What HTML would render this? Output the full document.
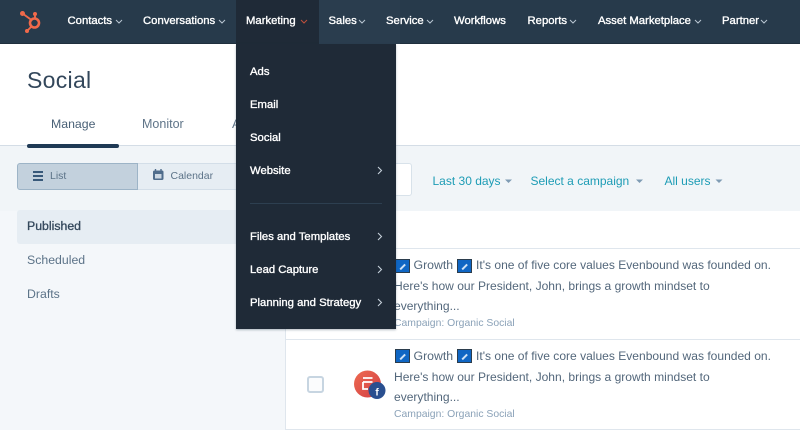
<!DOCTYPE html>
<html>
<head>
<meta charset="utf-8">
<style>
html,body{margin:0;padding:0;width:800px;height:430px;overflow:hidden;background:#fff;font-family:"Liberation Sans",sans-serif}
.a{position:absolute;white-space:nowrap}
#root{position:relative;width:800px;height:430px;overflow:hidden;filter:blur(.35px)}
.n{color:#fff;font-size:11.3px;-webkit-text-stroke:.35px #fff;top:14px;line-height:14px}
.m{color:#fff;font-size:11.3px;-webkit-text-stroke:.35px #fff;left:250px;line-height:14px}
.t{color:#53677b;font-size:12.05px;line-height:20px;left:394px}
.u{color:#1d9cb5;font-size:12px;top:173px;line-height:16px}
.s{color:#52687d;font-size:12.3px;left:27px;line-height:16px}
.e{position:absolute;width:15px;height:14px;background:#0f66c4;border:1px solid #2b3d4d;box-sizing:border-box}
.e:after{content:"";position:absolute;left:3px;top:5.5px;width:7px;height:1.5px;background:#cfe3f7;transform:rotate(-45deg)}
</style>
</head>
<body>
<div id="root">
<!-- nav -->
<div class="a" style="left:0;top:0;width:800px;height:43px;background:#273a4b;border-bottom:1px solid #1f2f3d"></div>
<div class="a" style="left:319px;top:0;width:81px;height:44px;background:#2a3d4e"></div>
<svg class="a" style="left:18px;top:9px" width="26" height="26" viewBox="0 0 26 26" fill="none" stroke="#f0694a">
<circle cx="16.500" cy="14" r="4.500" stroke-width="2.600"/>
<path d="M17 10V5M13.500 11L4.500 4.500M13.500 17.500L9 22" stroke-width="1.900"/>
<circle cx="17" cy="5" r="2" fill="#f0694a" stroke="none"/>
<circle cx="4.500" cy="4.500" r="2.500" fill="#f0694a" stroke="none"/>
<circle cx="9" cy="22" r="2" fill="#f0694a" stroke="none"/>
</svg>
<div class="a" style="left:236px;top:0;width:83px;height:44px;background:#1f2a37"></div>
<div class="a n" style="left:67.500px">Contacts</div>
<div class="a n" style="left:143px">Conversations</div>
<div class="a n" style="left:246px">Marketing</div>
<div class="a n" style="left:328.500px">Sales</div>
<div class="a n" style="left:386px">Service</div>
<div class="a n" style="left:454px">Workflows</div>
<div class="a n" style="left:527.500px">Reports</div>
<div class="a n" style="left:598px">Asset Marketplace</div>
<div class="a n" style="left:722px">Partner</div>
<svg class="a" style="left:0;top:0" width="800" height="44" fill="none" stroke="#b9c6d2" stroke-width="1">
<path d="M116 20l3 3 3-3M219 20l3 3 3-3M359 20l3 3 3-3M427 20l3 3 3-3M570 20l3 3 3-3M695 20l3 3 3-3M761 20l3 3 3-3"/>
<path d="M301 20l3 3 3-3" stroke="#c0503c"/>
</svg>
<!-- header -->
<div class="a" style="left:27px;top:65px;font-size:23px;line-height:30px;color:#33475b;letter-spacing:.3px">Social</div>
<div class="a" style="left:51px;top:116px;font-size:12.300px;line-height:16px;color:#4a6177">Manage</div>
<div class="a" style="left:142px;top:116px;font-size:12.500px;line-height:16px;color:#5f7488">Monitor</div>
<div class="a" style="left:232px;top:116px;font-size:12.300px;line-height:16px;color:#5f7488">A</div>
<!-- toolbar bg -->
<div class="a" style="left:0;top:145px;width:800px;height:285px;background:#f4f7fa;border-top:1px solid #d4dde6;box-sizing:border-box"></div>
<div class="a" style="left:0;top:146px;width:800px;height:65px;background:#f1f5f8"></div>
<div class="a" style="left:27px;top:144px;width:92px;height:3.500px;background:#1f3a55;border-radius:2px"></div>
<!-- List/Calendar -->
<div class="a" style="left:17px;top:163px;width:121px;height:27px;background:#c3d1dd;border:1px solid #9db4c7;border-radius:3px 0 0 3px;box-sizing:border-box"></div>
<div class="a" style="left:138px;top:163px;width:100px;height:27px;background:#e6edf3;border:1px solid #d3dee8;border-left:0;box-sizing:border-box"></div>
<svg class="a" style="left:32px;top:170px" width="12" height="12"><path d="M1 2h10M1 6h10M1 10h10" stroke="#38597a" stroke-width="2"/></svg>
<div class="a" style="left:50px;top:169px;font-size:10.500px;line-height:14px;color:#5c7388">List</div>
<svg class="a" style="left:152px;top:168px" width="13" height="14"><rect x="1" y="2.500" width="10.500" height="9.500" rx="1.500" fill="#506d8c"/><rect x="3" y="6" width="6.500" height="4.500" fill="#cdd8e3"/><path d="M3.500 1v3M9 1v3" stroke="#506d8c" stroke-width="1.400"/></svg>
<div class="a" style="left:170.500px;top:169px;font-size:10.500px;line-height:14px;color:#5c7388">Calendar</div>
<!-- search box -->
<div class="a" style="left:380px;top:163px;width:31.500px;height:33px;background:#fff;border:1px solid #d8e2ea;border-radius:3px;box-sizing:border-box"></div>
<!-- filters -->
<div class="a u" style="left:432.500px">Last 30 days</div>
<div class="a u" style="left:530.500px">Select a campaign</div>
<div class="a u" style="left:664.500px">All users</div>
<svg class="a" style="left:0;top:175px" width="800" height="12" fill="#7f9cb4"><path d="M505 4.500h7l-3.500 3.500zM636 4.500h7l-3.500 3.500zM715.500 4.500h7l-3.500 3.500z"/></svg>
<!-- sidebar -->
<div class="a" style="left:17px;top:210px;width:230px;height:33.500px;background:#e6edf3;border-radius:3px 0 0 3px"></div>
<div class="a s" style="top:218px;color:#33475b;-webkit-text-stroke:.3px #33475b">Published</div>
<div class="a s" style="top:252px;color:#5c7388">Scheduled</div>
<div class="a s" style="top:286px;color:#5c7388">Drafts</div>
<!-- table -->
<div class="a" style="left:285px;top:211px;width:515px;height:219px;background:#fff;border-left:1px solid #dfe6ed;box-sizing:border-box"></div>
<div class="a" style="left:285px;top:248px;width:515px;height:1px;background:#dfe6ed"></div>
<div class="a" style="left:285px;top:339px;width:515px;height:1px;background:#dfe6ed"></div>
<div class="a" style="left:285px;top:429px;width:515px;height:1px;background:#dfe6ed"></div>
<!-- row 1 -->
<div class="e" style="left:395px;top:259px"></div>
<div class="a t" style="left:413.500px;top:255px;font-size:12.300px">Growth</div>
<div class="e" style="left:457px;top:259px"></div>
<div class="a t" style="left:476px;top:255px">It's one of five core values Evenbound was founded on.</div>
<div class="a t" style="top:276px">Here's how our President, John, brings a growth mindset to</div>
<div class="a t" style="top:296px">everything...</div>
<div class="a" style="left:394px;top:317px;font-size:10.400px;line-height:14px;color:#8ba2b8">Campaign: Organic Social</div>
<!-- row 2 -->
<div class="e" style="left:395px;top:349px"></div>
<div class="a t" style="left:413.500px;top:346px;font-size:12.300px">Growth</div>
<div class="e" style="left:457px;top:349px"></div>
<div class="a t" style="left:476px;top:346px">It's one of five core values Evenbound was founded on.</div>
<div class="a t" style="top:367px">Here's how our President, John, brings a growth mindset to</div>
<div class="a t" style="top:387px">everything...</div>
<div class="a" style="left:394px;top:408px;font-size:10.400px;line-height:14px;color:#8ba2b8">Campaign: Organic Social</div>
<div class="a" style="left:307px;top:376px;width:17px;height:17px;background:#fbfcfd;border:2px solid #c7d5e1;border-radius:3px;box-sizing:border-box"></div>
<svg class="a" style="left:352px;top:369px" width="36" height="32">
<defs><linearGradient id="g" x1="0" y1="0" x2="1" y2="1"><stop offset="0" stop-color="#ee6a50"/><stop offset="1" stop-color="#d23f45"/></linearGradient></defs>
<circle cx="15.500" cy="15" r="13.500" fill="url(#g)"/>
<path d="M11 9h9.500M11 13h9.500M11 13v7h5" stroke="#fff" stroke-width="1.800" fill="none"/>
<circle cx="25" cy="21.500" r="8.500" fill="#2a4f8f"/>
<text x="25" y="26.500" font-family="Liberation Sans" font-weight="bold" font-size="10" fill="#fff" text-anchor="middle">f</text>
</svg>
<!-- dropdown -->
<div class="a" style="left:236px;top:44px;width:160px;height:285px;background:#1f2a37;box-shadow:0 1px 2px rgba(40,60,80,.35)"></div>
<div class="a m" style="top:65px">Ads</div>
<div class="a m" style="top:98px">Email</div>
<div class="a m" style="top:131px">Social</div>
<div class="a m" style="top:164px">Website</div>
<div class="a" style="left:250px;top:202.500px;width:132px;height:1.500px;background:#2d3f50"></div>
<div class="a m" style="top:230px">Files and Templates</div>
<div class="a m" style="top:263px">Lead Capture</div>
<div class="a m" style="top:296px">Planning and Strategy</div>
<svg class="a" style="left:376px;top:160px" width="8" height="150" fill="none" stroke="#c4cfd9" stroke-width="1.100"><path d="M2 7l3.500 3.500L2 14M2 73l3.500 3.500L2 80M2 106l3.500 3.500L2 113M2 139l3.500 3.500L2 146"/></svg>
</div>
</body>
</html>
